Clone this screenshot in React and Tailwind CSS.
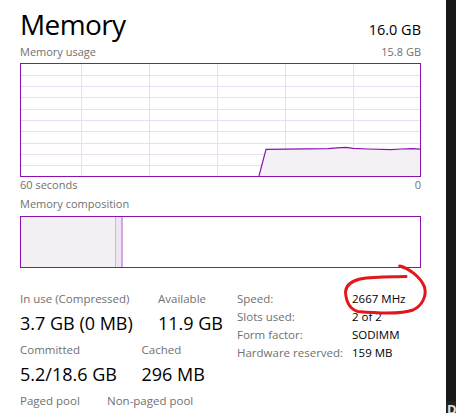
export default function App() {
  const hLines = [75.5, 86.5, 97.5, 109.5, 120.5, 131.5, 143.5, 154.5, 165.5];
  const vLines = [81.5, 149.5, 217.5, 285.5, 353.5];
  const line =
    "259,176 266,149.3 328,148.6 337,147.9 346,147.4 353,148.3 368,149 391,149.7 401,149 413,148.7 421,149.3";
  return (
    <div className="relative flex h-[413px] w-[456px] overflow-hidden bg-white font-['Open_Sans',sans-serif] text-black">
      <div className="w-[446px] pl-[20px]">
        <div className="flex w-[401px] flex-col">
          {/* header */}
          <div className="flex h-[38px] items-baseline justify-between pt-[10px]">
            <span className="text-[28px] leading-[28px] tracking-[-0.6px]">Memory</span>
            <span className="text-[14.5px] leading-none">16.0 GB</span>
          </div>
          <div className="mt-[7px] flex justify-between text-[11px] leading-[14px] text-[#707070]">
            <span>Memory usage</span>
            <span>15.8 GB</span>
          </div>
          {/* graph */}
          <div className="mt-[4px] h-[114px] border border-[#8b12ae]">
            <svg width="399" height="112" viewBox="21 64 399 112" className="block">
              {hLines.map((y) => (
                <line key={y} x1="21" x2="420" y1={y} y2={y} stroke="#ecdcf0" strokeWidth="1" />
              ))}
              {vLines.map((x) => (
                <line key={x} x1={x} x2={x} y1="64" y2="176" stroke="#ecdcf0" strokeWidth="1" />
              ))}
              <polygon points={`${line} 421,177 259,177`} fill="#f3f0f4" fillOpacity="0.92" />
              <polyline points={line} fill="none" stroke="#8b12ae" strokeWidth="1.2" />
            </svg>
          </div>
          <div className="mt-[1px] flex justify-between text-[11px] leading-[14px] text-[#707070]">
            <span>60 seconds</span>
            <span>0</span>
          </div>
          <div className="mt-[5px] text-[11px] leading-[14px] text-[#707070]">Memory composition</div>
          {/* composition */}
          <div className="mt-[5px] flex h-[52px] border border-[#8b12ae]">
            <div className="w-[95px] border-r border-[#d6b4df] bg-[#f3f0f4]" />
            <div className="w-[7px] border-r-2 border-[#d2a6dc] bg-[#efe4f2]" />
          </div>
          {/* stats */}
          <div className="mt-[22px] flex items-start">
            <div className="w-[217px] pt-[1px]">
              <div className="flex">
                <div className="w-[138px]">
                  <div className="text-[11.5px] leading-[16px] text-[#707070]">In use (Compressed)</div>
                  <div className="mt-[4px] text-[18px] leading-[24px]">3.7 GB (0 MB)</div>
                </div>
                <div>
                  <div className="text-[11.5px] leading-[16px] text-[#707070]">Available</div>
                  <div className="mt-[4px] text-[18px] leading-[24px]">11.9 GB</div>
                </div>
              </div>
              <div className="mt-[7px] flex">
                <div className="w-[121.5px]">
                  <div className="text-[11.5px] leading-[16px] text-[#707070]">Committed</div>
                  <div className="mt-[3.5px] text-[18px] leading-[24px]">5.2/18.6 GB</div>
                </div>
                <div>
                  <div className="text-[11.5px] leading-[16px] text-[#707070]">Cached</div>
                  <div className="mt-[3.5px] text-[18px] leading-[24px]">296 MB</div>
                </div>
              </div>
              <div className="mt-[7px] flex text-[11.5px] leading-[16px] text-[#707070]">
                <div className="w-[87px]">Paged pool</div>
                <div>Non-paged pool</div>
              </div>
            </div>
            <div className="grid grid-cols-[115px_auto] content-start text-[11.5px] leading-[18px]">
              <span className="text-[#707070]">Speed:</span>
              <span>2667 MHz</span>
              <span className="text-[#707070]">Slots used:</span>
              <span>2 of 2</span>
              <span className="text-[#707070]">Form factor:</span>
              <span>SODIMM</span>
              <span className="text-[#707070]">Hardware reserved:</span>
              <span>159 MB</span>
            </div>
          </div>
        </div>
      </div>
      {/* dark edge of neighbouring window */}
      <div className="flex w-[10px] flex-col bg-[#181818]">
        <div className="flex-1" />
        <div className="h-[12px] overflow-hidden bg-[#222222] pl-[1px] text-[13px] font-bold leading-[16px] text-[#e0e0e0]">
          D
        </div>
      </div>
      {/* red hand-drawn annotation */}
      <svg
        className="pointer-events-none absolute left-0 top-0"
        width="456"
        height="413"
        viewBox="0 0 456 413"
      >
        <path
          d="M399.7,266 C408,268 420,276 424.5,287 C427,296 422,306 413,310 C402,314 375,313 358,311.5 C349,309 346,300 345.5,292 C346,285 352,281 360,279 C375,276 392,277 406,276.5"
          fill="none"
          stroke="#e3161c"
          strokeWidth="3"
          strokeLinecap="round"
        />
      </svg>
    </div>
  );
}
